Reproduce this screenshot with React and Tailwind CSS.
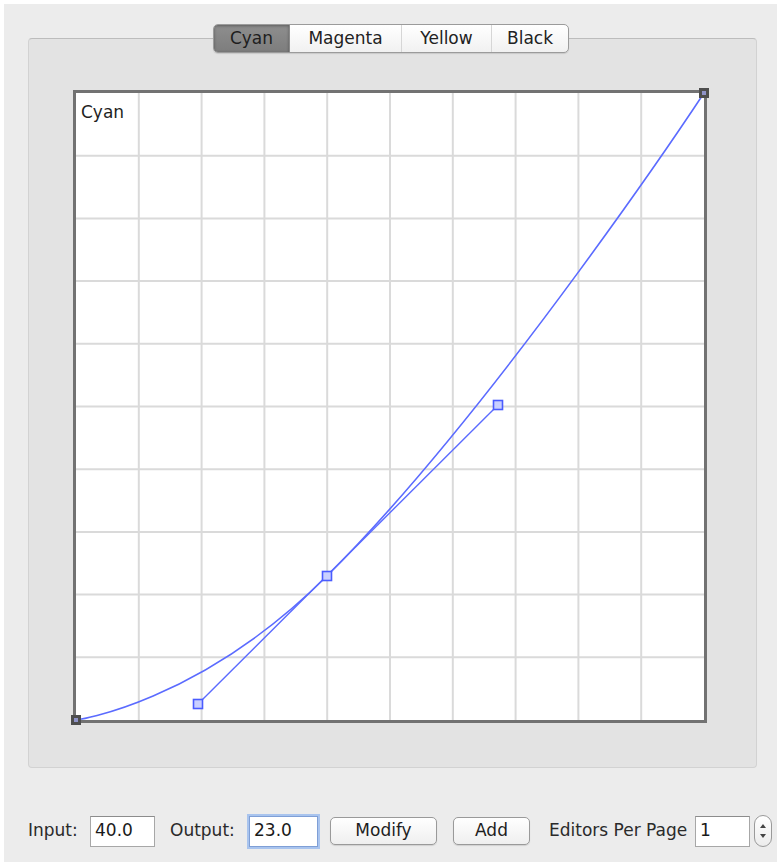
import React from "react";

const GRID_W = 628;
const GRID_H = 627;
const steps = [1, 2, 3, 4, 5, 6, 7, 8, 9];

const tabs = [
  { label: "Cyan", w: "w-[75px]", active: true },
  { label: "Magenta", w: "w-[112px]" },
  { label: "Yellow", w: "w-[90px]" },
  { label: "Black", w: "w-[77px]" },
];

function Tabs() {
  return (
    <div className="absolute -top-[15px] left-[184px] flex h-[29px] rounded-[5px] border border-[#9b9b9b] bg-gradient-to-b from-white to-[#f1f1f1] shadow-[0_1px_1px_rgba(0,0,0,0.12)] overflow-hidden">
      {tabs.map((t, i) => (
        <div
          key={t.label}
          className={`${t.w} flex items-center justify-center text-[17px] ${
            t.active
              ? "bg-gradient-to-b from-[#8e8e8e] to-[#7d7d7d] text-[#1e1e1e] shadow-[inset_0_1px_3px_rgba(0,0,0,0.35)]"
              : "text-[#222]"
          } ${i > 0 ? "border-l border-[#d6d6d6]" : ""} ${i === 1 ? "border-l-[#8a8a8a]" : ""}`}
        >
          {t.label}
        </div>
      ))}
    </div>
  );
}

function Handle({ x, y }) {
  return <rect x={x - 4.5} y={y - 4.5} width="9" height="9" fill="#c9d0ff" stroke="#4a5cff" strokeWidth="1.6" />;
}

function EndPoint({ x, y }) {
  return (
    <g>
      <rect x={x - 5} y={y - 5} width="10" height="10" fill="#4e4e4e" />
      <rect x={x - 2} y={y - 2} width="4" height="4" fill="#8f93c8" />
    </g>
  );
}

function CurveGraph() {
  return (
    <div className="relative w-[634px] h-[633px] border-[3px] border-[#727272] bg-white">
      <svg
        className="absolute left-0 top-0 overflow-visible"
        width={GRID_W}
        height={GRID_H}
        viewBox={`0 0 ${GRID_W} ${GRID_H}`}
      >
        {steps.map((s) => (
          <line key={"v" + s} x1={(GRID_W * s) / 10} y1="0" x2={(GRID_W * s) / 10} y2={GRID_H} stroke="#dadada" strokeWidth="2" />
        ))}
        {steps.map((s) => (
          <line key={"h" + s} x1="0" y1={(GRID_H * s) / 10} x2={GRID_W} y2={(GRID_H * s) / 10} stroke="#dadada" strokeWidth="2" />
        ))}
        <line x1="122" y1="611" x2="422" y2="312" stroke="#5b6bff" strokeWidth="1.4" />
        <path
          d="M0,627 C0,627 122,611 251,483 C422,312 628,0 628,0"
          fill="none"
          stroke="#5b6bff"
          strokeWidth="1.6"
        />
        <Handle x={122} y={611} />
        <Handle x={251} y={483} />
        <Handle x={422} y={312} />
        <EndPoint x={0} y={627} />
        <EndPoint x={628} y={0} />
      </svg>
      <div className="absolute left-[5px] top-[7px] text-[17px] text-[#1f1f1f]">Cyan</div>
    </div>
  );
}

function TextField({ value, w, focus }) {
  return (
    <div
      className={`${w} h-[31px] flex items-center px-[4px] bg-white text-[17px] text-[#1a1a1a] border ${
        focus
          ? "border-[#7f9fd6] shadow-[0_0_0_2px_#a9c4ee]"
          : "border-[#a7a7a7] border-t-[#8c8c8c]"
      }`}
    >
      {value}
    </div>
  );
}

function Button({ children, w }) {
  return (
    <div
      className={`${w} h-[28px] flex items-center justify-center rounded-[5px] border border-[#9a9a9a] bg-gradient-to-b from-white to-[#efefef] text-[17px] text-[#1e1e1e] shadow-[0_1px_1px_rgba(0,0,0,0.12)]`}
    >
      {children}
    </div>
  );
}

export default function App() {
  return (
    <div className="w-[784px] h-[867px] bg-white pt-[4px] pl-[4px] font-['DejaVu_Sans',sans-serif]">
      <div className="w-[773px] h-[858px] bg-[#ececec] flex flex-col">
        <div className="relative mt-[34px] ml-[24px] w-[729px] h-[730px] rounded-[4px] border border-[#d2d2d2] border-t-[#bcbcbc] bg-[#e3e3e3] pl-[44px] pt-[51px]">
          <Tabs />
          <CurveGraph />
        </div>

        <div className="mt-[47px] ml-[24px] flex items-center text-[17px] text-[#2a2a2a]">
          <span className="w-[52px]">Input:</span>
          <div className="ml-[10px]">
            <TextField value="40.0" w="w-[65px]" />
          </div>
          <span className="ml-[15px] w-[70px]">Output:</span>
          <div className="ml-[9px]">
            <TextField value="23.0" w="w-[69px]" focus />
          </div>
          <div className="ml-[12px]">
            <Button w="w-[107px]">Modify</Button>
          </div>
          <div className="ml-[16px]">
            <Button w="w-[77px]">Add</Button>
          </div>
          <span className="ml-[19px] w-[145px] whitespace-nowrap">Editors Per Page</span>
          <div className="ml-[1px]">
            <TextField value="1" w="w-[55px]" />
          </div>
          <div className="ml-[4px] w-[18px] h-[32px] rounded-full border border-[#9a9a9a] bg-gradient-to-b from-white to-[#ececec] flex flex-col items-center justify-center gap-[6px]">
            <svg width="6" height="4" viewBox="0 0 6 4">
              <path d="M3,0 L6,4 L0,4 Z" fill="#444" />
            </svg>
            <svg width="6" height="4" viewBox="0 0 6 4">
              <path d="M0,0 L6,0 L3,4 Z" fill="#444" />
            </svg>
          </div>
        </div>
      </div>
    </div>
  );
}
